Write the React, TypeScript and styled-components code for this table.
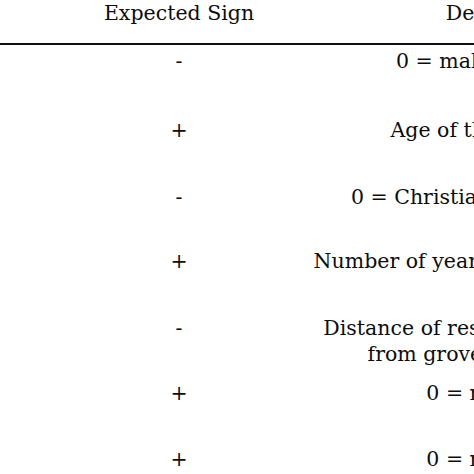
import styled, { createGlobalStyle } from "styled-components";

const rows = [
  { sign: "-", desc: ["0 = male, 1 = female"], height: 69 },
  { sign: "+", desc: ["Age of the respondent"], height: 67 },
  { sign: "-", desc: ["0 = Christian, 1 = Traditional"], height: 64 },
  { sign: "+", desc: ["Number of years of formal education"], height: 67 },
  {
    sign: "-",
    desc: ["Distance of respondent's residence", "from grove to market (km)"],
    height: 65,
  },
  { sign: "+", desc: ["0 = no, 1 = yes"], height: 66 },
  { sign: "+", desc: ["0 = no, 1 = yes"], height: 66 },
];

const GlobalStyle = createGlobalStyle`
  html, body {
    margin: 0;
    padding: 0;
    background: #ffffff;
    overflow: hidden;
  }
  body {
    font-family: "DejaVu Serif", "Liberation Serif", serif;
    color: #0d0d0d;
  }
`;

const Table = styled.div`
  width: 738px;
  font-size: 20.5px;
  line-height: 26px;
`;

const HeadRow = styled.div`
  display: grid;
  grid-template-columns: 84px 190px 464px;
  height: 43px;
  border-bottom: 2px solid #111111;
`;

const Row = styled.div<{ $h: number }>`
  display: grid;
  grid-template-columns: 84px 190px 464px;
  align-items: start;
  height: ${({ $h }) => $h}px;
`;

const Body = styled.div`
  padding-top: 3px;
`;

const Cell = styled.div`
  text-align: center;
  white-space: nowrap;
`;

const App = () => (
  <>
    <GlobalStyle />
    <Table>
      <HeadRow>
        <Cell />
        <Cell>Expected Sign</Cell>
        <Cell>Description</Cell>
      </HeadRow>
      <Body>
        {rows.map((row, i) => (
          <Row key={i} $h={row.height}>
            <Cell />
            <Cell>{row.sign}</Cell>
            <Cell>
              {row.desc.map((line) => (
                <div key={line}>{line}</div>
              ))}
            </Cell>
          </Row>
        ))}
      </Body>
    </Table>
  </>
);

export default App;
